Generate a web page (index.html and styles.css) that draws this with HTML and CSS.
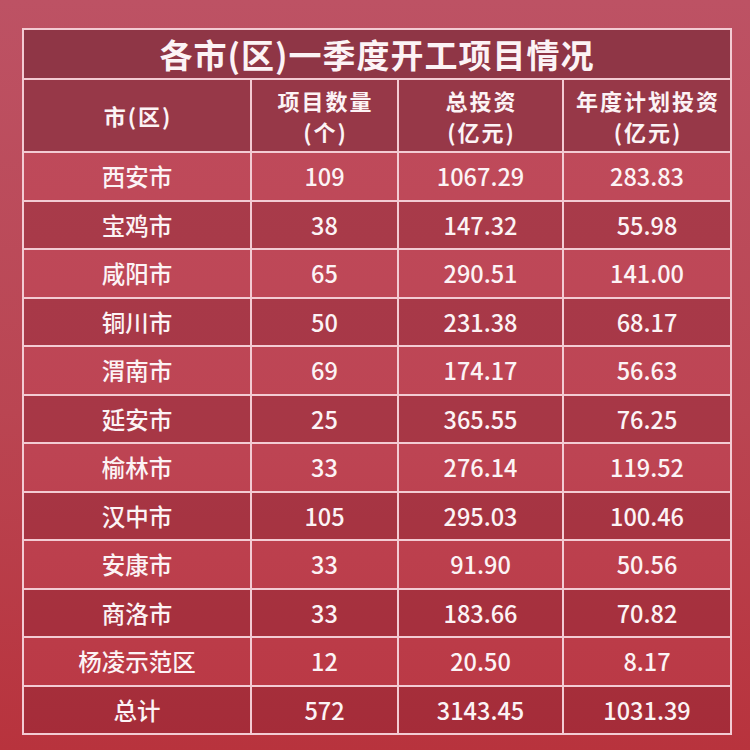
FILE: index.html
```html
<!DOCTYPE html>
<html lang="zh-CN">
<head>
<meta charset="utf-8">
<title>各市(区)一季度开工项目情况</title>
<link rel="stylesheet" href="styles.css">
</head>
<body>
<div class="board">
  <table class="report">
    <colgroup>
      <col class="c1"><col class="c2"><col class="c3"><col class="c4">
    </colgroup>
    <thead>
      <tr class="title-row"><th colspan="4" class="title">各市(区)一季度开工项目情况</th></tr>
      <tr class="head-row">
        <th><span class="hl">市(区)</span></th>
        <th><span class="hl">项目数量</span><span class="hl">(个)</span></th>
        <th><span class="hl">总投资</span><span class="hl">(亿元)</span></th>
        <th><span class="hl">年度计划投资</span><span class="hl">(亿元)</span></th>
      </tr>
    </thead>
    <tbody>
      <tr class="light"><td>西安市</td><td>109</td><td>1067.29</td><td>283.83</td></tr>
      <tr class="dark"><td>宝鸡市</td><td>38</td><td>147.32</td><td>55.98</td></tr>
      <tr class="light"><td>咸阳市</td><td>65</td><td>290.51</td><td>141.00</td></tr>
      <tr class="dark"><td>铜川市</td><td>50</td><td>231.38</td><td>68.17</td></tr>
      <tr class="light"><td>渭南市</td><td>69</td><td>174.17</td><td>56.63</td></tr>
      <tr class="dark"><td>延安市</td><td>25</td><td>365.55</td><td>76.25</td></tr>
      <tr class="light"><td>榆林市</td><td>33</td><td>276.14</td><td>119.52</td></tr>
      <tr class="dark"><td>汉中市</td><td>105</td><td>295.03</td><td>100.46</td></tr>
      <tr class="light"><td>安康市</td><td>33</td><td>91.90</td><td>50.56</td></tr>
      <tr class="dark"><td>商洛市</td><td>33</td><td>183.66</td><td>70.82</td></tr>
      <tr class="light"><td>杨凌示范区</td><td>12</td><td>20.50</td><td>8.17</td></tr>
      <tr class="dark"><td>总计</td><td>572</td><td>3143.45</td><td>1031.39</td></tr>
    </tbody>
  </table>
</div>
</body>
</html>
```

FILE: styles.css
```css
html, body {
  margin: 0;
  padding: 0;
}
body {
  width: 750px;
  height: 750px;
  overflow: hidden;
  background: linear-gradient(to bottom, #bd5264 0%, #ba4552 55%, #b8333d 100%);
  font-family: "Noto Sans CJK SC", "Noto Sans", sans-serif;
  color: #fcf3f5;
}
.board {
  padding: 28px 0 0 22px;
}
.report {
  width: 708px;
  border-collapse: collapse;
  table-layout: fixed;
  background: linear-gradient(to bottom, #bf4c5d 0%, #bd4453 60%, #ba3743 100%);
  border: 2px solid #f6d3da;
}
.c1 { width: 228px; }
.c2 { width: 147px; }
.c3 { width: 165px; }
.c4 { width: 168px; }

.report th,
.report td {
  border: 2px solid #f3cbd3;
  text-align: center;
  padding: 0;
  font-weight: 500;
}
.title-row .title {
  height: 48px;
  font-size: 33px;
  line-height: 40px;
  font-weight: 700;
  letter-spacing: 1px;
  background: #8f3646;
}
.head-row th {
  height: 71px;
  font-size: 22px;
  line-height: 31px;
  font-weight: 700;
  letter-spacing: 2px;
  background: #973848;
}
.hl {
  display: block;
  margin-right: -2px;
}
.report tbody td {
  height: 46.5px;
  font-size: 23.5px;
  line-height: 26px;
}
.report tbody tr.dark td {
  background: rgba(90, 10, 25, 0.22);
}
```
